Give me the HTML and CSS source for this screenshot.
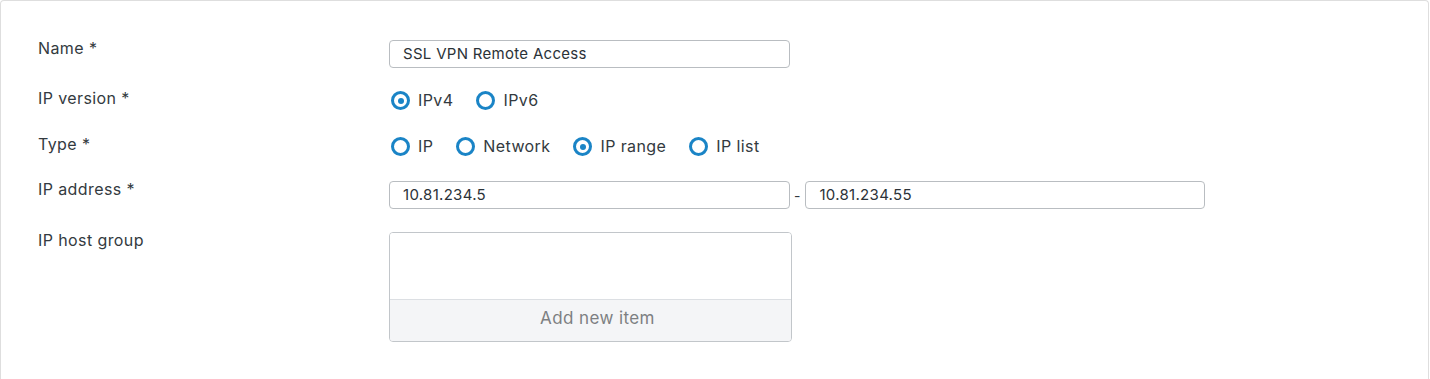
FILE: index.html
```html
<!DOCTYPE html>
<html>
<head>
<meta charset="utf-8">
<link rel="stylesheet" href="styles.css">
</head>
<body>
<div class="card">
  <div class="row r1">
    <div class="label">Name *</div>
    <div class="field"><div class="input wide">SSL VPN Remote Access</div></div>
  </div>
  <div class="row r2">
    <div class="label">IP version *</div>
    <div class="field radios">
      <span class="opt"><span class="radio on"></span>IPv4</span>
      <span class="opt"><span class="radio"></span>IPv6</span>
    </div>
  </div>
  <div class="row r3">
    <div class="label">Type *</div>
    <div class="field radios">
      <span class="opt"><span class="radio"></span>IP</span>
      <span class="opt"><span class="radio"></span>Network</span>
      <span class="opt"><span class="radio on"></span>IP range</span>
      <span class="opt"><span class="radio"></span>IP list</span>
    </div>
  </div>
  <div class="row r4">
    <div class="label">IP address *</div>
    <div class="field range">
      <div class="input wide">10.81.234.5</div>
      <span class="dash">-</span>
      <div class="input wide">10.81.234.55</div>
    </div>
  </div>
  <div class="row r5">
    <div class="label">IP host group</div>
    <div class="field">
      <div class="listbox">
        <div class="items"></div>
        <div class="add">Add new item</div>
      </div>
    </div>
  </div>
</div>
</body>
</html>
```
FILE: styles.css
```css
html, body {
  margin: 0;
  padding: 0;
  background: #ffffff;
}
body {
  font-family: "Inter", "Liberation Sans", sans-serif;
  color: #333a40;
}
.card {
  box-sizing: border-box;
  width: 1429px;
  height: 379px;
  border: 1px solid #dedede;
  border-bottom: none;
  border-radius: 4px 4px 0 0;
  padding: 37px 0 0 37px;
}
.row {
  display: flex;
  align-items: flex-start;
}
.r1 { height: 50px; }
.r2 { height: 46px; }
.r3 { height: 45px; }
.r4 { height: 51px; }
.label {
  width: 351px;
  flex: none;
  font-size: 16px;
  letter-spacing: 0.4px;
  line-height: 20px;
  color: #333a40;
}
.field {
  display: flex;
  align-items: center;
}
.input {
  box-sizing: border-box;
  height: 28px;
  margin-top: 2px;
  border: 1px solid #b9bdc1;
  border-radius: 4px;
  padding: 0 13px;
  font-size: 15px;
  letter-spacing: 0.3px;
  line-height: 26px;
  color: #2b3238;
}
.wide { width: 401px; }
.range .input + .dash + .input { width: 400px; }
.dash {
  margin: 2px 5px 0 4px;
  font-size: 14px;
  color: #333a40;
}
.radios {
  margin-top: 3px;
  height: 19px;
  font-size: 16px;
  letter-spacing: 0.4px;
}
.opt {
  display: inline-flex;
  align-items: center;
  margin-right: 21px;
  line-height: 19px;
}
.radio {
  box-sizing: border-box;
  width: 19px;
  height: 19px;
  border: 3px solid #1a84c6;
  border-radius: 50%;
  margin: 0 8px 0 2px;
  position: relative;
  flex: none;
}
.radio.on::after {
  content: "";
  position: absolute;
  left: 3.5px;
  top: 3.5px;
  width: 6px;
  height: 6px;
  border-radius: 50%;
  background: #1a84c6;
}
.listbox {
  box-sizing: border-box;
  width: 403px;
  height: 110px;
  margin-top: 2px;
  border: 1px solid #c2c6ca;
  border-radius: 4px;
  display: flex;
  flex-direction: column;
  overflow: hidden;
}
.items {
  height: 66px;
  border-bottom: 1px solid #dcdfe3;
  background: #ffffff;
}
.add {
  flex: 1;
  background: #f4f5f7;
  display: flex;
  align-items: center;
  justify-content: center;
  padding: 0 0 6px 14px;
  font-size: 17px;
  letter-spacing: 0.4px;
  color: #7d7f82;
}
```
